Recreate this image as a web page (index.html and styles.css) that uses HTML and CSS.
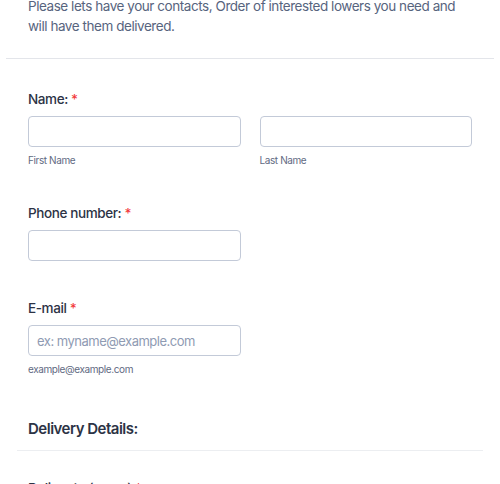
FILE: index.html
```html
<!DOCTYPE html>
<html>
<head>
<meta charset="utf-8">
<link rel="stylesheet" href="styles.css">
</head>
<body>
<div class="page">
  <div class="intro">
    <p class="intro-text">Please lets have your contacts, Order of interested lowers you need and will have them delivered.</p>
  </div>
  <div class="divider"></div>

  <div class="field field-first">
    <div class="label">Name: <span class="req">*</span></div>
    <div class="row">
      <div class="col">
        <input class="input" type="text">
        <div class="sublabel">First Name</div>
      </div>
      <div class="col">
        <input class="input" type="text">
        <div class="sublabel">Last Name</div>
      </div>
    </div>
  </div>

  <div class="field">
    <div class="label">Phone number: <span class="req">*</span></div>
    <div class="row">
      <div class="col">
        <input class="input" type="text">
      </div>
      <div class="col"></div>
    </div>
  </div>

  <div class="field field-email">
    <div class="label">E-mail <span class="req">*</span></div>
    <div class="row">
      <div class="col">
        <input class="input" type="text" placeholder="ex: myname@example.com">
        <div class="sublabel">example@example.com</div>
      </div>
      <div class="col"></div>
    </div>
  </div>

  <div class="section">
    <div class="section-title">Delivery Details:</div>
    <div class="section-divider"></div>
  </div>

  <div class="field field-deliver">
    <div class="label">Deliver to (name) <span class="req">*</span></div>
  </div>
</div>
</body>
</html>
```
FILE: styles.css
```css
* { box-sizing: border-box; }
html, body { margin: 0; padding: 0; background: #ffffff; }
body {
  font-family: Inter, "Noto Sans", "Liberation Sans", sans-serif;
  color: #2c3345;
  overflow: hidden;
  height: 484px;
}
.page { padding: 0 6px; }
.intro { padding: 0 22px 22px; }
.intro-text {
  margin: -4px 0 0;
  font-size: 13.5px;
  line-height: 20px;
  letter-spacing: -0.45px;
  color: #57647e;
}
.divider { height: 1px; background: #e3e5ea; }
.field { padding: 36px 22px 0; }
.field-first { padding-top: 30px; }
.field-email { padding-top: 37px; }
.label {
  font-size: 13.5px;
  line-height: 20px;
  font-weight: 500;
  letter-spacing: -0.4px;
  color: #2c3345;
  margin-bottom: 7px;
}
.req { color: #f23a3c; }
.row { display: flex; gap: 19px; }
.col { flex: 1; }
.input {
  display: block;
  width: 100%;
  height: 31px;
  border: 1px solid #c3cad8;
  border-radius: 4px;
  background: #fff;
  padding: 0 8px;
  font-family: inherit;
  font-size: 13px;
  letter-spacing: -0.5px;
  color: #2c3345;
  outline: none;
}
.input::placeholder { color: #8f9bb3; }
.sublabel {
  margin-top: 6px;
  font-size: 10px;
  line-height: 14px;
  letter-spacing: -0.4px;
  color: #5f6a82;
}
.section { padding: 43px 11px 0; }
.section-title {
  padding: 0 11px;
  font-size: 15px;
  line-height: 20px;
  font-weight: 600;
  letter-spacing: -0.5px;
  color: #2c3345;
}
.section-divider { margin-top: 11px; height: 1px; background: #eceef1; }
.field-deliver { padding-top: 27px; }
```
